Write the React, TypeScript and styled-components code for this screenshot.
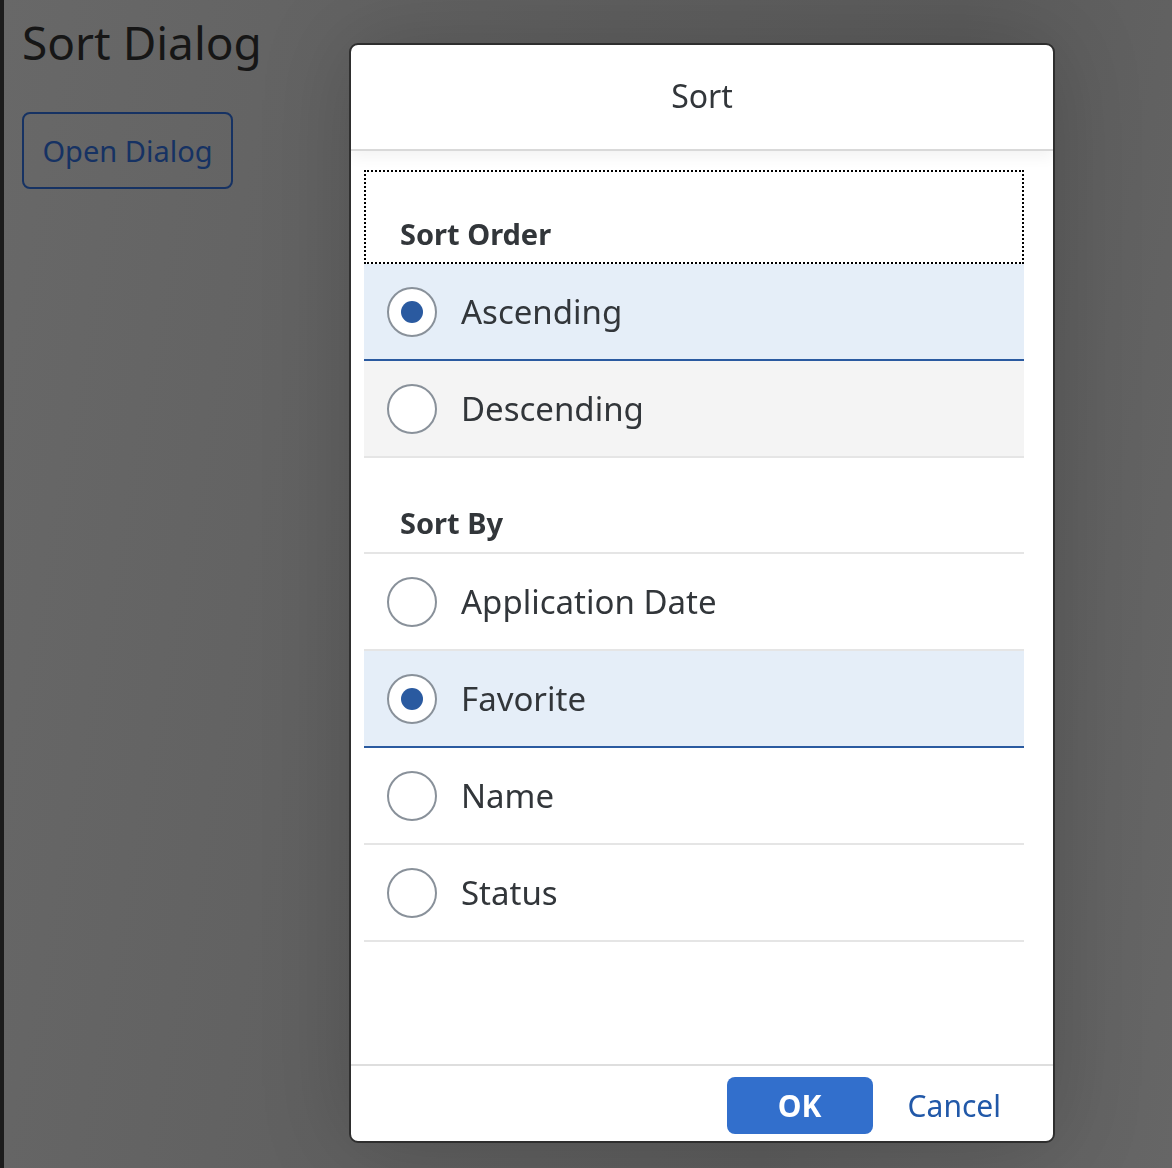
import { useState } from 'react';
import styled, { createGlobalStyle } from 'styled-components';

type Option = { key: string; label: string };

const sortOrders: Option[] = [
    { key: 'asc', label: 'Ascending' },
    { key: 'desc', label: 'Descending' },
];

const sortFields: Option[] = [
    { key: 'date', label: 'Application Date' },
    { key: 'fav', label: 'Favorite' },
    { key: 'name', label: 'Name' },
    { key: 'status', label: 'Status' },
];

const App = () => {
    const [order, setOrder] = useState('asc');
    const [field, setField] = useState('fav');
    const hovered = 'desc';

    return (
        <>
            <GlobalStyle />
            <Page>
                <EditorStrip />
                <Main>
                    <PageTitle>Sort Dialog</PageTitle>
                    <OpenButton>Open Dialog</OpenButton>
                </Main>
                <Overlay>
                    <Dialog>
                        <Header>Sort</Header>
                        <Content>
                            <List>
                                <GroupHeader $focused>Sort Order</GroupHeader>
                                {sortOrders.map((o) => (
                                    <Row
                                        key={o.key}
                                        $selected={order === o.key}
                                        $hover={hovered === o.key}
                                        onClick={() => setOrder(o.key)}
                                    >
                                        <Radio $checked={order === o.key} />
                                        <RowLabel>{o.label}</RowLabel>
                                    </Row>
                                ))}
                                <GroupHeader>Sort By</GroupHeader>
                                {sortFields.map((f) => (
                                    <Row
                                        key={f.key}
                                        $selected={field === f.key}
                                        onClick={() => setField(f.key)}
                                    >
                                        <Radio $checked={field === f.key} />
                                        <RowLabel>{f.label}</RowLabel>
                                    </Row>
                                ))}
                            </List>
                        </Content>
                        <Footer>
                            <OkButton>OK</OkButton>
                            <CancelButton>Cancel</CancelButton>
                        </Footer>
                    </Dialog>
                </Overlay>
            </Page>
        </>
    );
};

export default App;

const GlobalStyle = createGlobalStyle`
    html, body, #root {
        margin: 0;
        height: 100%;
    }
    body {
        font-family: "Noto Sans", "Open Sans", sans-serif;
        background: #666666;
        color: #32363a;
    }
`;

const Page = styled.div`
    display: flex;
    height: 100%;
    background: linear-gradient(100deg, #686868 0%, #5f5f5f 45%, #5c5c5c 70%, #666666 100%);
`;

const EditorStrip = styled.div`
    width: 4px;
    background: #1c1c1c;
    flex-shrink: 0;
`;

const Main = styled.div`
    display: flex;
    flex-direction: column;
    align-items: flex-start;
    padding: 8px 0 0 18px;
`;

const PageTitle = styled.h1`
    margin: 0;
    font-size: 46px;
    font-weight: 400;
    line-height: 68px;
    color: #161616;
`;

const OpenButton = styled.button`
    margin-top: 36px;
    width: 211px;
    height: 77px;
    border: 2px solid #163263;
    border-radius: 8px;
    background: transparent;
    font-family: inherit;
    font-size: 29px;
    color: #163263;
    padding: 0;
`;

const Overlay = styled.div`
    position: fixed;
    inset: 0;
    display: flex;
    align-items: flex-start;
    padding: 43px 0 0 349px;
`;

const Dialog = styled.div`
    width: 706px;
    height: 1100px;
    box-sizing: border-box;
    display: flex;
    flex-direction: column;
    background: #ffffff;
    border: 2px solid #2e2e2e;
    border-radius: 9px;
    overflow: hidden;
    box-shadow: 0 0 90px rgba(0, 0, 0, 0.18);
`;

const Header = styled.div`
    height: 106px;
    flex-shrink: 0;
    display: flex;
    align-items: center;
    justify-content: center;
    padding-bottom: 4px;
    box-sizing: border-box;
    font-size: 32px;
    color: #32363a;
    border-bottom: 2px solid #d9d9d9;
    box-shadow: 0 6px 14px rgba(0, 0, 0, 0.05);
    position: relative;
    z-index: 1;
`;

const Content = styled.div`
    flex: 1;
    padding: 19px 29px 0 13px;
`;

const List = styled.div`
    display: flex;
    flex-direction: column;
`;

const GroupHeader = styled.div<{ $focused?: boolean }>`
    box-sizing: border-box;
    height: ${(p) => (p.$focused ? '94px' : '96px')};
    display: flex;
    align-items: flex-end;
    padding: 0 0 ${(p) => (p.$focused ? '9px' : '10px')} ${(p) => (p.$focused ? '34px' : '36px')};
    font-size: 29px;
    font-weight: 700;
    color: #32363a;
    border: ${(p) => (p.$focused ? '2px dotted #000' : 'none')};
    border-bottom: ${(p) => (p.$focused ? '2px dotted #000' : '2px solid #e5e5e5')};
`;

const Row = styled.div<{ $selected?: boolean; $hover?: boolean }>`
    box-sizing: border-box;
    height: 97px;
    display: flex;
    align-items: center;
    gap: 24px;
    padding-left: 23px;
    background: ${(p) => (p.$selected ? '#e5eef8' : p.$hover ? '#f4f4f4' : '#ffffff')};
    border-bottom: 2px solid ${(p) => (p.$selected ? '#2a5aa0' : '#e5e5e5')};
    cursor: pointer;
`;

const Radio = styled.span<{ $checked?: boolean }>`
    width: 50px;
    height: 50px;
    box-sizing: border-box;
    border-radius: 50%;
    border: 2px solid #89919a;
    background: #ffffff;
    display: flex;
    align-items: center;
    justify-content: center;
    flex-shrink: 0;
    &::after {
        content: '';
        width: 22px;
        height: 22px;
        border-radius: 50%;
        background: #2a5aa0;
        display: ${(p) => (p.$checked ? 'block' : 'none')};
    }
`;

const RowLabel = styled.span`
    font-size: 33px;
    color: #32363a;
`;

const Footer = styled.div`
    box-sizing: border-box;
    height: 77px;
    flex-shrink: 0;
    display: flex;
    align-items: center;
    justify-content: flex-end;
    gap: 35px;
    padding: 4px 52px 0 0;
    border-top: 2px solid #dedede;
`;

const OkButton = styled.button`
    width: 146px;
    height: 57px;
    border: none;
    border-radius: 8px;
    background: #326fcc;
    color: #ffffff;
    font-family: inherit;
    font-size: 30px;
    font-weight: 700;
`;

const CancelButton = styled.button`
    border: none;
    background: none;
    padding: 0;
    color: #2158a8;
    font-family: inherit;
    font-size: 30px;
`;
